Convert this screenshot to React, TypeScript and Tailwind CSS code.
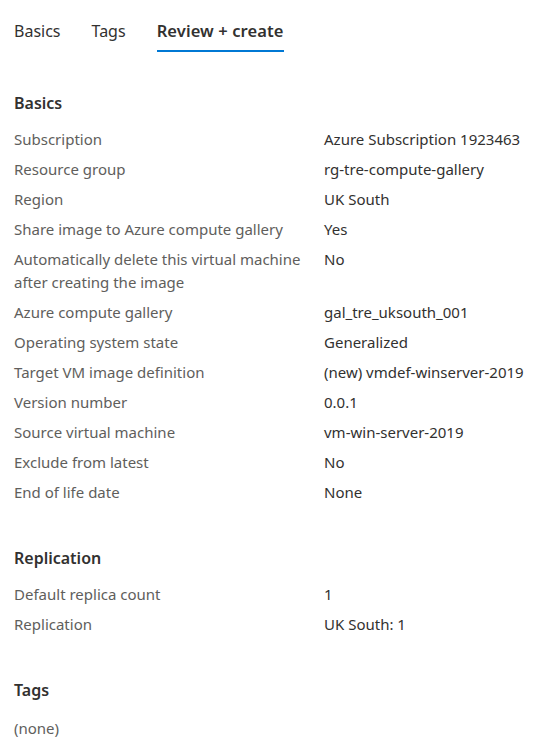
import React from 'react';

type Row = { label: string; value: string };

const basics: Row[] = [
  { label: 'Subscription', value: 'Azure Subscription 1923463' },
  { label: 'Resource group', value: 'rg-tre-compute-gallery' },
  { label: 'Region', value: 'UK South' },
  { label: 'Share image to Azure compute gallery', value: 'Yes' },
  { label: 'Automatically delete this virtual machine after creating the image', value: 'No' },
  { label: 'Azure compute gallery', value: 'gal_tre_uksouth_001' },
  { label: 'Operating system state', value: 'Generalized' },
  { label: 'Target VM image definition', value: '(new) vmdef-winserver-2019' },
  { label: 'Version number', value: '0.0.1' },
  { label: 'Source virtual machine', value: 'vm-win-server-2019' },
  { label: 'Exclude from latest', value: 'No' },
  { label: 'End of life date', value: 'None' },
];

const replication: Row[] = [
  { label: 'Default replica count', value: '1' },
  { label: 'Replication', value: 'UK South: 1' },
];

const Section = ({ title, rows, className = '' }: { title: string; rows: Row[]; className?: string }) => (
  <section className={className}>
    <h2 className="text-[16px] leading-[24px] font-semibold text-[#323130] mb-[13px]">{title}</h2>
    <div className="flex flex-col gap-[7px]">
      {rows.map((r) => (
        <div key={r.label} className="flex text-[15px] leading-[23px]">
          <div className="w-[310px] pr-[16px] text-[#605e5c]">{r.label}</div>
          <div className="flex-1 text-[#323130]">{r.value}</div>
        </div>
      ))}
    </div>
  </section>
);

export default function App() {
  const tabs = ['Basics', 'Tags', 'Review + create'];
  return (
    <div className="w-[549px] h-[756px] bg-white px-[14px] font-['Noto_Sans','Open_Sans',sans-serif]">
      <nav className="flex gap-[31px] pt-[19px]">
        {tabs.map((t, i) => (
          <div
            key={t}
            className={`pb-[7px] leading-[24px] border-b-2 ${
              i === 2
                ? 'border-[#0078d4] text-[#323130] font-semibold text-[16.5px] tracking-[0.1px]'
                : 'border-transparent text-[#323130] text-[16px]'
            }`}
          >
            {t}
          </div>
        ))}
      </nav>
      <Section title="Basics" rows={basics} className="mt-[39px]" />
      <Section title="Replication" rows={replication} className="mt-[42px]" />
      <section className="mt-[42px]">
        <h2 className="text-[16px] leading-[24px] font-semibold text-[#323130] mb-[15px]">Tags</h2>
        <div className="text-[15px] leading-[23px] text-[#605e5c]">(none)</div>
      </section>
    </div>
  );
}
